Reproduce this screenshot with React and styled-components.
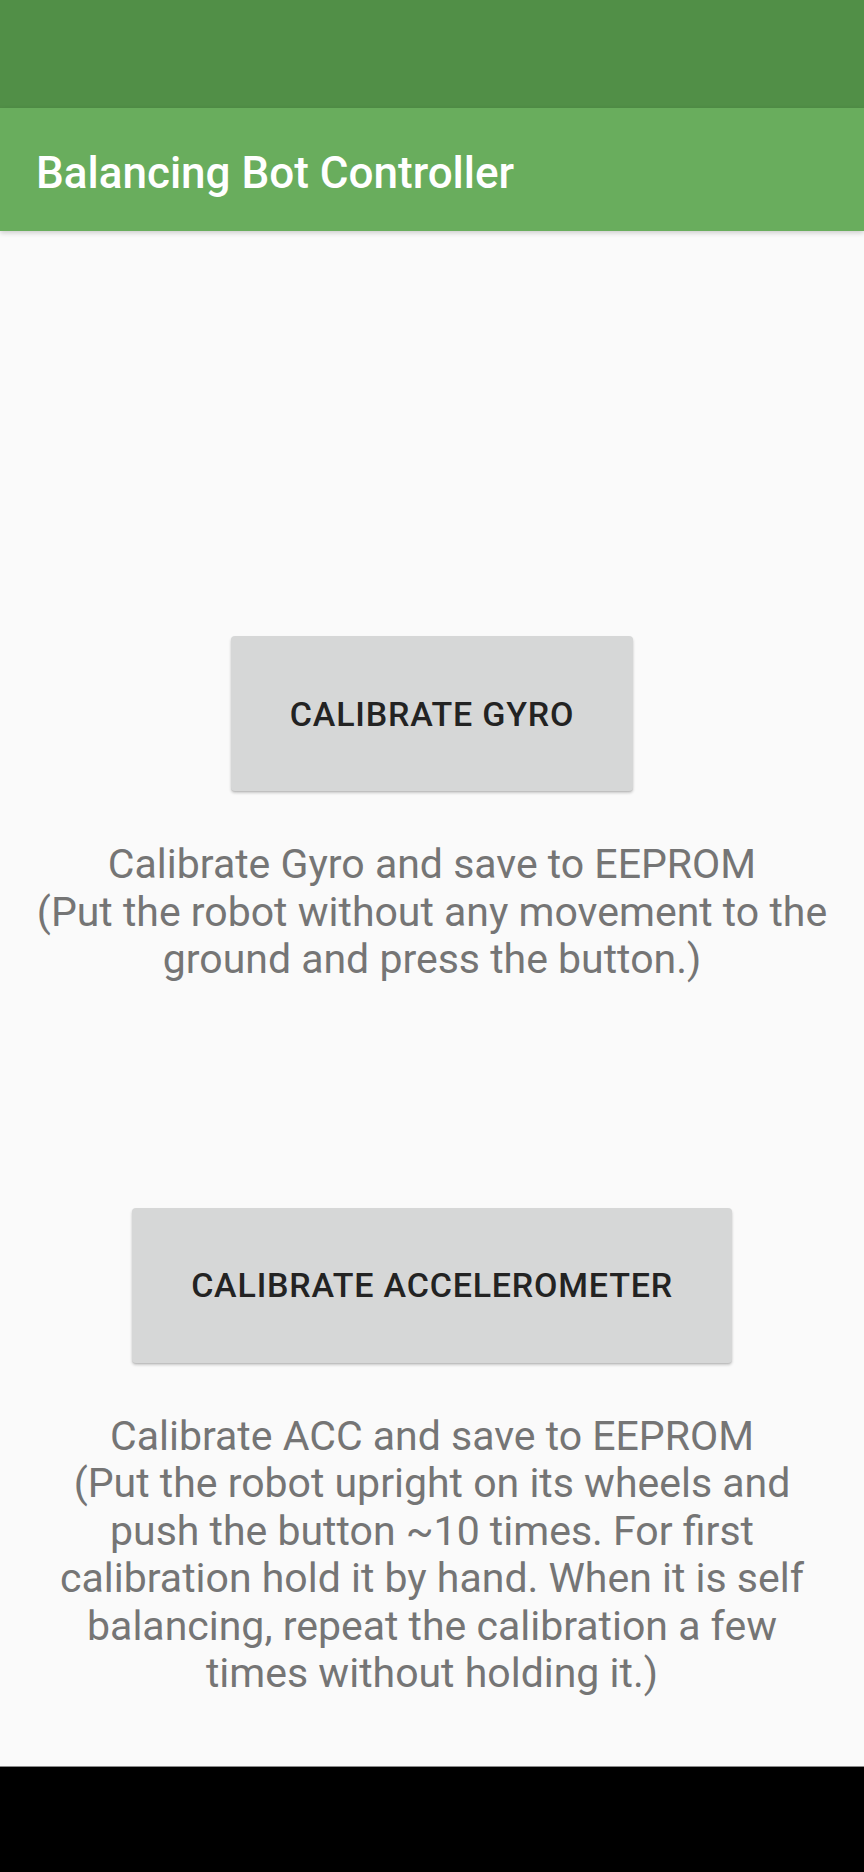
import React from "react";
import styled, { createGlobalStyle } from "styled-components";

const GlobalStyle = createGlobalStyle`
  html, body {
    margin: 0;
    padding: 0;
    background: #fafafa;
  }
  * { box-sizing: border-box; }
`;

const Screen = styled.div`
  width: 864px;
  height: 1872px;
  display: flex;
  flex-direction: column;
  background: #fafafa;
  font-family: Roboto, "Noto Sans", "Liberation Sans", sans-serif;
  overflow: hidden;
`;

const StatusBar = styled.div`
  height: 108px;
  flex: none;
  background: #518f47;
`;

const AppBar = styled.header`
  height: 123px;
  flex: none;
  display: flex;
  align-items: center;
  padding: 6px 0 0 36px;
  background: #69ad5d;
  box-shadow: 0 2px 5px rgba(0, 0, 0, 0.18);
  position: relative;
  z-index: 1;
`;

const Title = styled.h1`
  margin: 0;
  font-family: Roboto, sans-serif;
  font-weight: 500;
  font-size: 44px;
  line-height: 1;
  color: #ffffff;
`;

const Content = styled.main`
  flex: 1;
  display: flex;
  flex-direction: column;
  align-items: center;
  padding-top: 405px;
`;

const Section = styled.section`
  display: flex;
  flex-direction: column;
  align-items: center;
  margin-top: ${(p) => p.$gap || 0}px;
`;

const CalButton = styled.button`
  height: 155px;
  padding: 0 59px;
  border: none;
  border-radius: 4px;
  background: #d6d7d7;
  box-shadow: 0 2px 3px rgba(0, 0, 0, 0.2), 0 1px 1px rgba(0, 0, 0, 0.08);
  font-family: Roboto, sans-serif;
  font-weight: 500;
  font-size: 34px;
  letter-spacing: 0.8px;
  color: #232323;
  text-transform: uppercase;
  cursor: pointer;
`;

const Description = styled.p`
  margin: 50px 0 0;
  font-family: Roboto, sans-serif;
  font-weight: 400;
  font-size: 41px;
  line-height: 47.5px;
  color: #757575;
  text-align: center;
`;

const Line = styled.span`
  display: block;
  white-space: nowrap;
`;

const NavBar = styled.div`
  height: 106px;
  flex: none;
  background: #000;
  border-top: 1px solid #8a8a8a;
`;

const sections = [
  {
    label: "Calibrate Gyro",
    gap: 0,
    lines: [
      "Calibrate Gyro and save to EEPROM",
      "(Put the robot without any movement to the",
      "ground and press the button.)",
    ],
  },
  {
    label: "Calibrate Accelerometer",
    gap: 224,
    lines: [
      "Calibrate ACC and save to EEPROM",
      "(Put the robot upright on its wheels and",
      "push the button ~10 times. For first",
      "calibration hold it by hand. When it is self",
      "balancing, repeat the calibration a few",
      "times without holding it.)",
    ],
  },
];

export default function App() {
  return (
    <>
      <GlobalStyle />
      <Screen>
        <StatusBar />
        <AppBar>
          <Title>Balancing Bot Controller</Title>
        </AppBar>
        <Content>
          {sections.map((s) => (
            <Section key={s.label} $gap={s.gap}>
              <CalButton type="button">{s.label}</CalButton>
              <Description>
                {s.lines.map((l) => (
                  <Line key={l}>{l}</Line>
                ))}
              </Description>
            </Section>
          ))}
        </Content>
        <NavBar />
      </Screen>
    </>
  );
}
